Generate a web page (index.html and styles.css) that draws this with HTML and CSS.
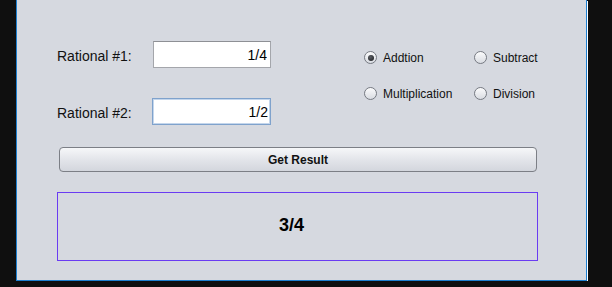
FILE: index.html
```html
<!DOCTYPE html>
<html>
<head>
  <title>Rational Calculator</title>
  <link rel="stylesheet" href="styles.css">
</head>
<body>
  <div class="frame">
    <div class="panel">
      <div class="top-row">
        <div class="fields">
          <label class="field-label" for="r1">Rational #1:</label>
          <input class="field" type="text" id="r1" value="1/4">
          <label class="field-label" for="r2">Rational #2:</label>
          <input class="field field-focus" type="text" id="r2" value="1/2">
        </div>
        <div class="ops">
          <div class="op"><span class="radio checked"></span>Addtion</div>
          <div class="op"><span class="radio"></span>Subtract</div>
          <div class="op"><span class="radio"></span>Multiplication</div>
          <div class="op"><span class="radio"></span>Division</div>
        </div>
      </div>
      <button class="result-btn">Get Result</button>
      <div class="result">3/4</div>
    </div>
  </div>
</body>
</html>
```

FILE: styles.css
```css
body {
  margin: 0;
  background-color: #0f0f0f;
  font-family: "Liberation Sans", Arial, sans-serif;
}

.frame {
  margin-left: 16px;
  width: 569px;
  height: 280px;
  border-left: 1px solid #1c7fd0;
  border-right: 1px solid #1c7fd0;
  border-bottom: 1px solid #1c7fd0;
  box-shadow: 1px 1px 0 #ffffff;
  background-color: #d6d9e0;
}

.panel {
  padding-top: 41px;
}

.top-row {
  display: flex;
}

.fields {
  display: grid;
  grid-template-columns: 96px 118px;
  grid-auto-rows: 27px;
  row-gap: 30px;
  margin-left: 40px;
  align-items: center;
}

.field-label {
  font-size: 14px;
  color: #111;
  padding-top: 2px;
}

.field {
  box-sizing: border-box;
  width: 118px;
  height: 27px;
  margin: 0;
  padding: 0 3px 0 0;
  border: 1px solid #a4a6ab;
  border-top-color: #8e9095;
  background: #ffffff;
  text-align: right;
  font-family: "Liberation Sans", Arial, sans-serif;
  font-size: 14px;
  color: #000;
  outline: none;
}

.field-focus {
  border-color: #7fa2cc;
  box-shadow: inset 0 0 0 1px #c4d6ec;
  margin-left: -1px;
  width: 119px;
  padding-right: 2px;
}

.caret {
  border-right: 1px solid #000;
}

.ops {
  display: grid;
  grid-template-columns: 110px auto;
  grid-auto-rows: 13px;
  row-gap: 23px;
  margin-left: 93px;
  margin-top: 10px;
}

.op {
  display: flex;
  align-items: center;
  gap: 6px;
  font-size: 12px;
  color: #111;
}

.radio {
  box-sizing: border-box;
  width: 13px;
  height: 13px;
  border-radius: 50%;
  border: 1px solid #767a82;
  background: linear-gradient(#fbfbfc, #d9dce2);
  display: flex;
  align-items: center;
  justify-content: center;
}

.radio.checked::after {
  content: "";
  width: 6px;
  height: 6px;
  border-radius: 50%;
  background: radial-gradient(circle at 40% 35%, #5a5d63, #1a1b1e);
}

.result-btn {
  display: block;
  box-sizing: border-box;
  margin: 22px 0 0 42px;
  width: 478px;
  height: 25px;
  border: 1px solid #7c7f86;
  border-radius: 4px;
  background: linear-gradient(#f6f7f9, #e3e5ea 50%, #d3d6dd);
  font-family: "Liberation Sans", Arial, sans-serif;
  font-size: 12px;
  font-weight: bold;
  color: #111;
  padding: 0;
}

.result {
  box-sizing: border-box;
  margin: 20px 0 0 40px;
  width: 481px;
  height: 69px;
  padding-right: 12px;
  padding-bottom: 2px;
  border: 1px solid #6a3cf2;
  display: flex;
  align-items: center;
  justify-content: center;
  font-size: 18px;
  font-weight: bold;
  color: #000;
}
```
